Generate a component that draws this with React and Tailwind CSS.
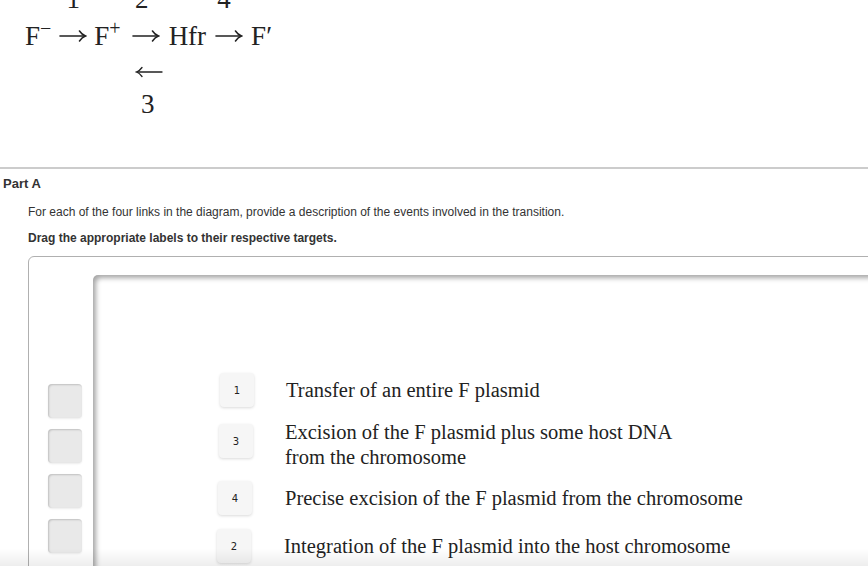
import React from "react";

const serif = "font-['Liberation_Serif','Times_New_Roman',serif]";

function Arrow({ left = false, className = "" }) {
  return (
    <svg width="28" height="14" viewBox="0 0 28 14" className={className} fill="none" stroke="#222" strokeLinecap="round">
      {left ? (
        <>
          <path d="M27 7H2" strokeWidth="1.3" />
          <path d="M7 2.5Q4.5 6 1.5 7Q4.5 8 7 11.5" strokeWidth="1.3" />
        </>
      ) : (
        <>
          <path d="M1 7H26" strokeWidth="1.6" />
          <path d="M20.5 2Q23 5.8 26.5 7Q23 8.2 20.5 12" strokeWidth="1.5" />
        </>
      )}
    </svg>
  );
}

function Col({ top, children, below, className = "" }) {
  return (
    <div className={`flex flex-col items-center ${className}`}>
      <div className="h-[29px] leading-[29px]">{top}</div>
      <div className="flex h-[44px] items-center leading-[44px] whitespace-nowrap">
        <span className="flex items-center">{children}</span>
      </div>
      {below}
    </div>
  );
}

const rows = [
  { n: "1", lines: ["Transfer of an entire F plasmid"], h: "h-[34px]", mt: "mt-0", ml: "ml-[127px]", tl: "ml-[32px]" },
  { n: "3", lines: ["Excision of the F plasmid plus some host DNA", "from the chromosome"], h: "h-[50px]", mt: "mt-[13px]", ml: "ml-[126px]", tl: "ml-[32px]" },
  { n: "4", lines: ["Precise excision of the F plasmid from the chromosome"], h: "h-[34px]", mt: "mt-[11px]", ml: "ml-[125px]", tl: "ml-[33px]" },
  { n: "2", lines: ["Integration of the F plasmid into the host chromosome"], h: "h-[34px]", mt: "mt-[14px]", ml: "ml-[124px]", tl: "ml-[33px]" },
];

export default function App() {
  return (
    <div className="relative h-[566px] w-[868px] overflow-hidden bg-white font-['Liberation_Sans',Arial,sans-serif] text-[#333]">
      {/* Diagram */}
      <div className={`mt-[-15px] flex items-start pl-[25px] text-[27px] text-[#222] ${serif}`}>
        <Col>
          <span>
            F<sup className="text-[20px]">−</sup>
          </span>
        </Col>
        <Col top="1" className="ml-[8px]">
          <Arrow />
        </Col>
        <Col className="ml-[7px]">
          <span>
            F<sup className="text-[20px]">+</sup>
          </span>
        </Col>
        <Col
          top={<span className="mr-[8px]">2</span>}
          className="ml-[8px]"
          below={
            <>
              <div className="flex h-[28px] items-center pl-[6px]">
                <Arrow left />
              </div>
              <div className="h-[36px] pl-[4px] leading-[36px]">3</div>
            </>
          }
        >
          <Arrow />
        </Col>
        <Col className="ml-[6px]">
          <span>Hfr</span>
        </Col>
        <Col top={<span className="mr-[10px]">4</span>} className="ml-[9px]">
          <Arrow />
        </Col>
        <Col className="ml-[8px]">
          <span>F′</span>
        </Col>
      </div>

      <div className="mt-[45px] h-[2px] bg-[#cccccc]" />

      {/* Part A */}
      <div className="mt-[7px] pl-[3px] text-[13px] font-bold leading-[16px] text-[#333]">Part A</div>
      <p className="mt-[13px] pl-[28px] text-[12px] leading-[14px] text-[#333]">
        For each of the four links in the diagram, provide a description of the events involved in the transition.
      </p>
      <p className="mt-[12px] pl-[28px] text-[12px] font-bold leading-[14px] text-[#333]">
        Drag the appropriate labels to their respective targets.
      </p>

      {/* Outer box */}
      <div className="ml-[28px] mt-[11px] flex h-[400px] w-[900px] rounded-tl-[6px] border border-[#b0b0b0] pl-[19px] pt-[18px]">
        <div className="mt-[109px] flex w-[34px] flex-col gap-[11px]">
          {[0, 1, 2, 3].map((i) => (
            <div
              key={i}
              className="h-[34px] w-[34px] rounded-[4px] bg-[#e9e9e9] shadow-[inset_1px_1px_2px_rgba(0,0,0,0.18),0_1px_2px_rgba(0,0,0,0.08)]"
            />
          ))}
        </div>

        {/* Inner box */}
        <div className="ml-[11px] flex-1 rounded-tl-[5px] bg-white pt-[98px] shadow-[inset_3px_3px_5px_rgba(0,0,0,0.35)]">
          {rows.map((r) => (
            <div key={r.n} className={`flex items-center ${r.h} ${r.mt}`}>
              <div
                className={`${r.ml} ${r.lines.length > 1 ? "mb-[8px]" : ""} flex h-[34px] w-[34px] shrink-0 items-center justify-center rounded-[4px] bg-[#f6f6f6] font-['DejaVu_Sans',Verdana,sans-serif] text-[10px] text-[#222] shadow-[0_1px_3px_rgba(0,0,0,0.15)]`}
              >
                {r.n}
              </div>
              <div className={`${r.tl} ${serif} text-[20.5px] leading-[25px] text-[#222]`}>
                {r.lines.map((l) => (
                  <div key={l}>{l}</div>
                ))}
              </div>
            </div>
          ))}
        </div>
      </div>

      {/* bottom fade */}
      <div className="pointer-events-none absolute bottom-0 left-0 h-[18px] w-full bg-gradient-to-b from-black/0 to-black/[0.07]" />
    </div>
  );
}
